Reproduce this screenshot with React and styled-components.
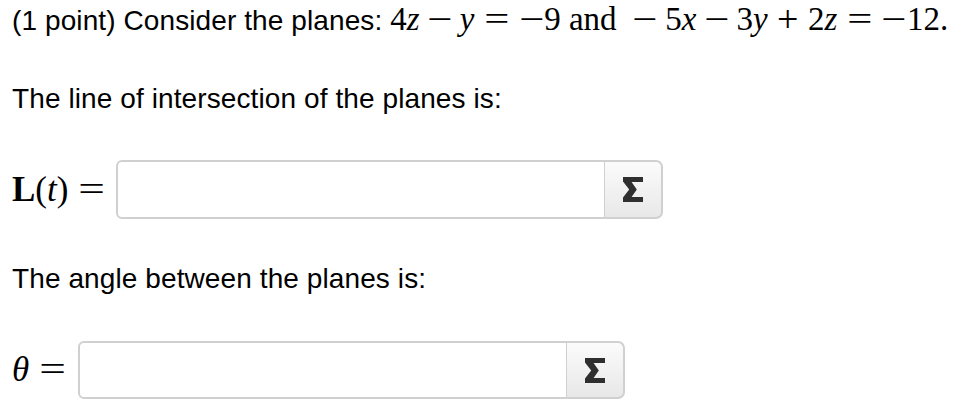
import React from "react";
import styled, { createGlobalStyle } from "styled-components";

const GlobalStyle = createGlobalStyle`
  body {
    margin: 0;
    background: #fff;
    color: #000;
    font-family: "Liberation Sans", Arial, sans-serif;
  }
`;

const Page = styled.div`
  padding: 0 12px;
`;

const Text = styled.p`
  margin: ${(p) => p.$top}px 0 0;
  font-size: 28px;
  letter-spacing: 0.1px;
  line-height: 30px;
  height: 30px;
  white-space: nowrap;
`;

const Math = styled.span`
  font-family: "Liberation Serif", "Times New Roman", serif;
  font-size: 33px;
  letter-spacing: 0;
`;

const V = styled.i`
  font-style: italic;
`;

const B = styled.b`
  font-weight: bold;
`;

// TeX operators are wider than the Times ones: fixed box, glyph stretched
const Op = styled.span`
  display: inline-block;
  width: 0.778em;
  text-align: center;
  transform: ${(p) => (p.$plus ? "scale(1.15)" : "scaleX(1.35)")};
  margin: 0 ${(p) => (p.$unary ? 0 : p.$rel ? 0.278 : 0.222)}em;
`;

const Row = styled.div`
  display: flex;
  align-items: center;
  margin-top: ${(p) => p.$top}px;
`;

const Label = styled.span`
  font-family: "Liberation Serif", "Times New Roman", serif;
  font-size: 35px;
  width: ${(p) => p.$w}px;
  white-space: nowrap;
`;

const Field = styled.div`
  display: flex;
  height: ${(p) => p.$h}px;
`;

const Input = styled.input`
  box-sizing: border-box;
  width: 489px;
  height: 100%;
  margin: 0;
  padding: 0 10px;
  border: 2px solid #d0d0d0;
  border-right: 1px solid #d0d0d0;
  border-radius: 6px 0 0 6px;
  background: #fff;
  font-size: 20px;
  outline: none;
`;

const SigmaButton = styled.button`
  box-sizing: border-box;
  width: 58px;
  height: 100%;
  margin: 0;
  padding: 0;
  border: 2px solid #d0d0d0;
  border-left: none;
  border-radius: 0 7px 7px 0;
  background: linear-gradient(#fbfbfb, #e8e8e8);
  display: flex;
  align-items: center;
  justify-content: center;
`;

const Sigma = () => (
  <svg width="20" height="25" viewBox="0 0 20 25">
    <path
      d="M0 0 H20 V5 H8.6 L13.8 12.5 L8.6 20 H20 V25 H0 V20.6 L6.2 12.5 L0 4.4 Z"
      fill="#2f2f2f"
    />
  </svg>
);

const AnswerField = ({ label, labelWidth, height, top }) => (
  <Row $top={top}>
    <Label $w={labelWidth}>{label}</Label>
    <Field $h={height}>
      <Input type="text" />
      <SigmaButton type="button">
        <Sigma />
      </SigmaButton>
    </Field>
  </Row>
);

const App = () => (
  <Page>
    <GlobalStyle />
    <Text $top={4}>
      (1 point) Consider the planes:{" "}
      <Math>
        4<V>z</V>
        <Op>−</Op>
        <V>y</V>
        <Op $rel>=</Op>
        <Op $unary>−</Op>9 and <Op>−</Op>5<V>x</V>
        <Op>−</Op>3<V>y</V>
        <Op $plus>+</Op>2<V>z</V>
        <Op $rel>=</Op>
        <Op $unary>−</Op>12.
      </Math>
    </Text>
    <Text $top={50}>The line of intersection of the planes is:</Text>
    <AnswerField
      top={46}
      height={59}
      labelWidth={104}
      label={
        <>
          <B>L</B>(<V>t</V>)<Op $rel>=</Op>
        </>
      }
    />
    <Text $top={45}>The angle between the planes is:</Text>
    <AnswerField
      top={47}
      height={58}
      labelWidth={66}
      label={
        <>
          <V>θ</V>
          <Op $rel>=</Op>
        </>
      }
    />
  </Page>
);

export default App;
